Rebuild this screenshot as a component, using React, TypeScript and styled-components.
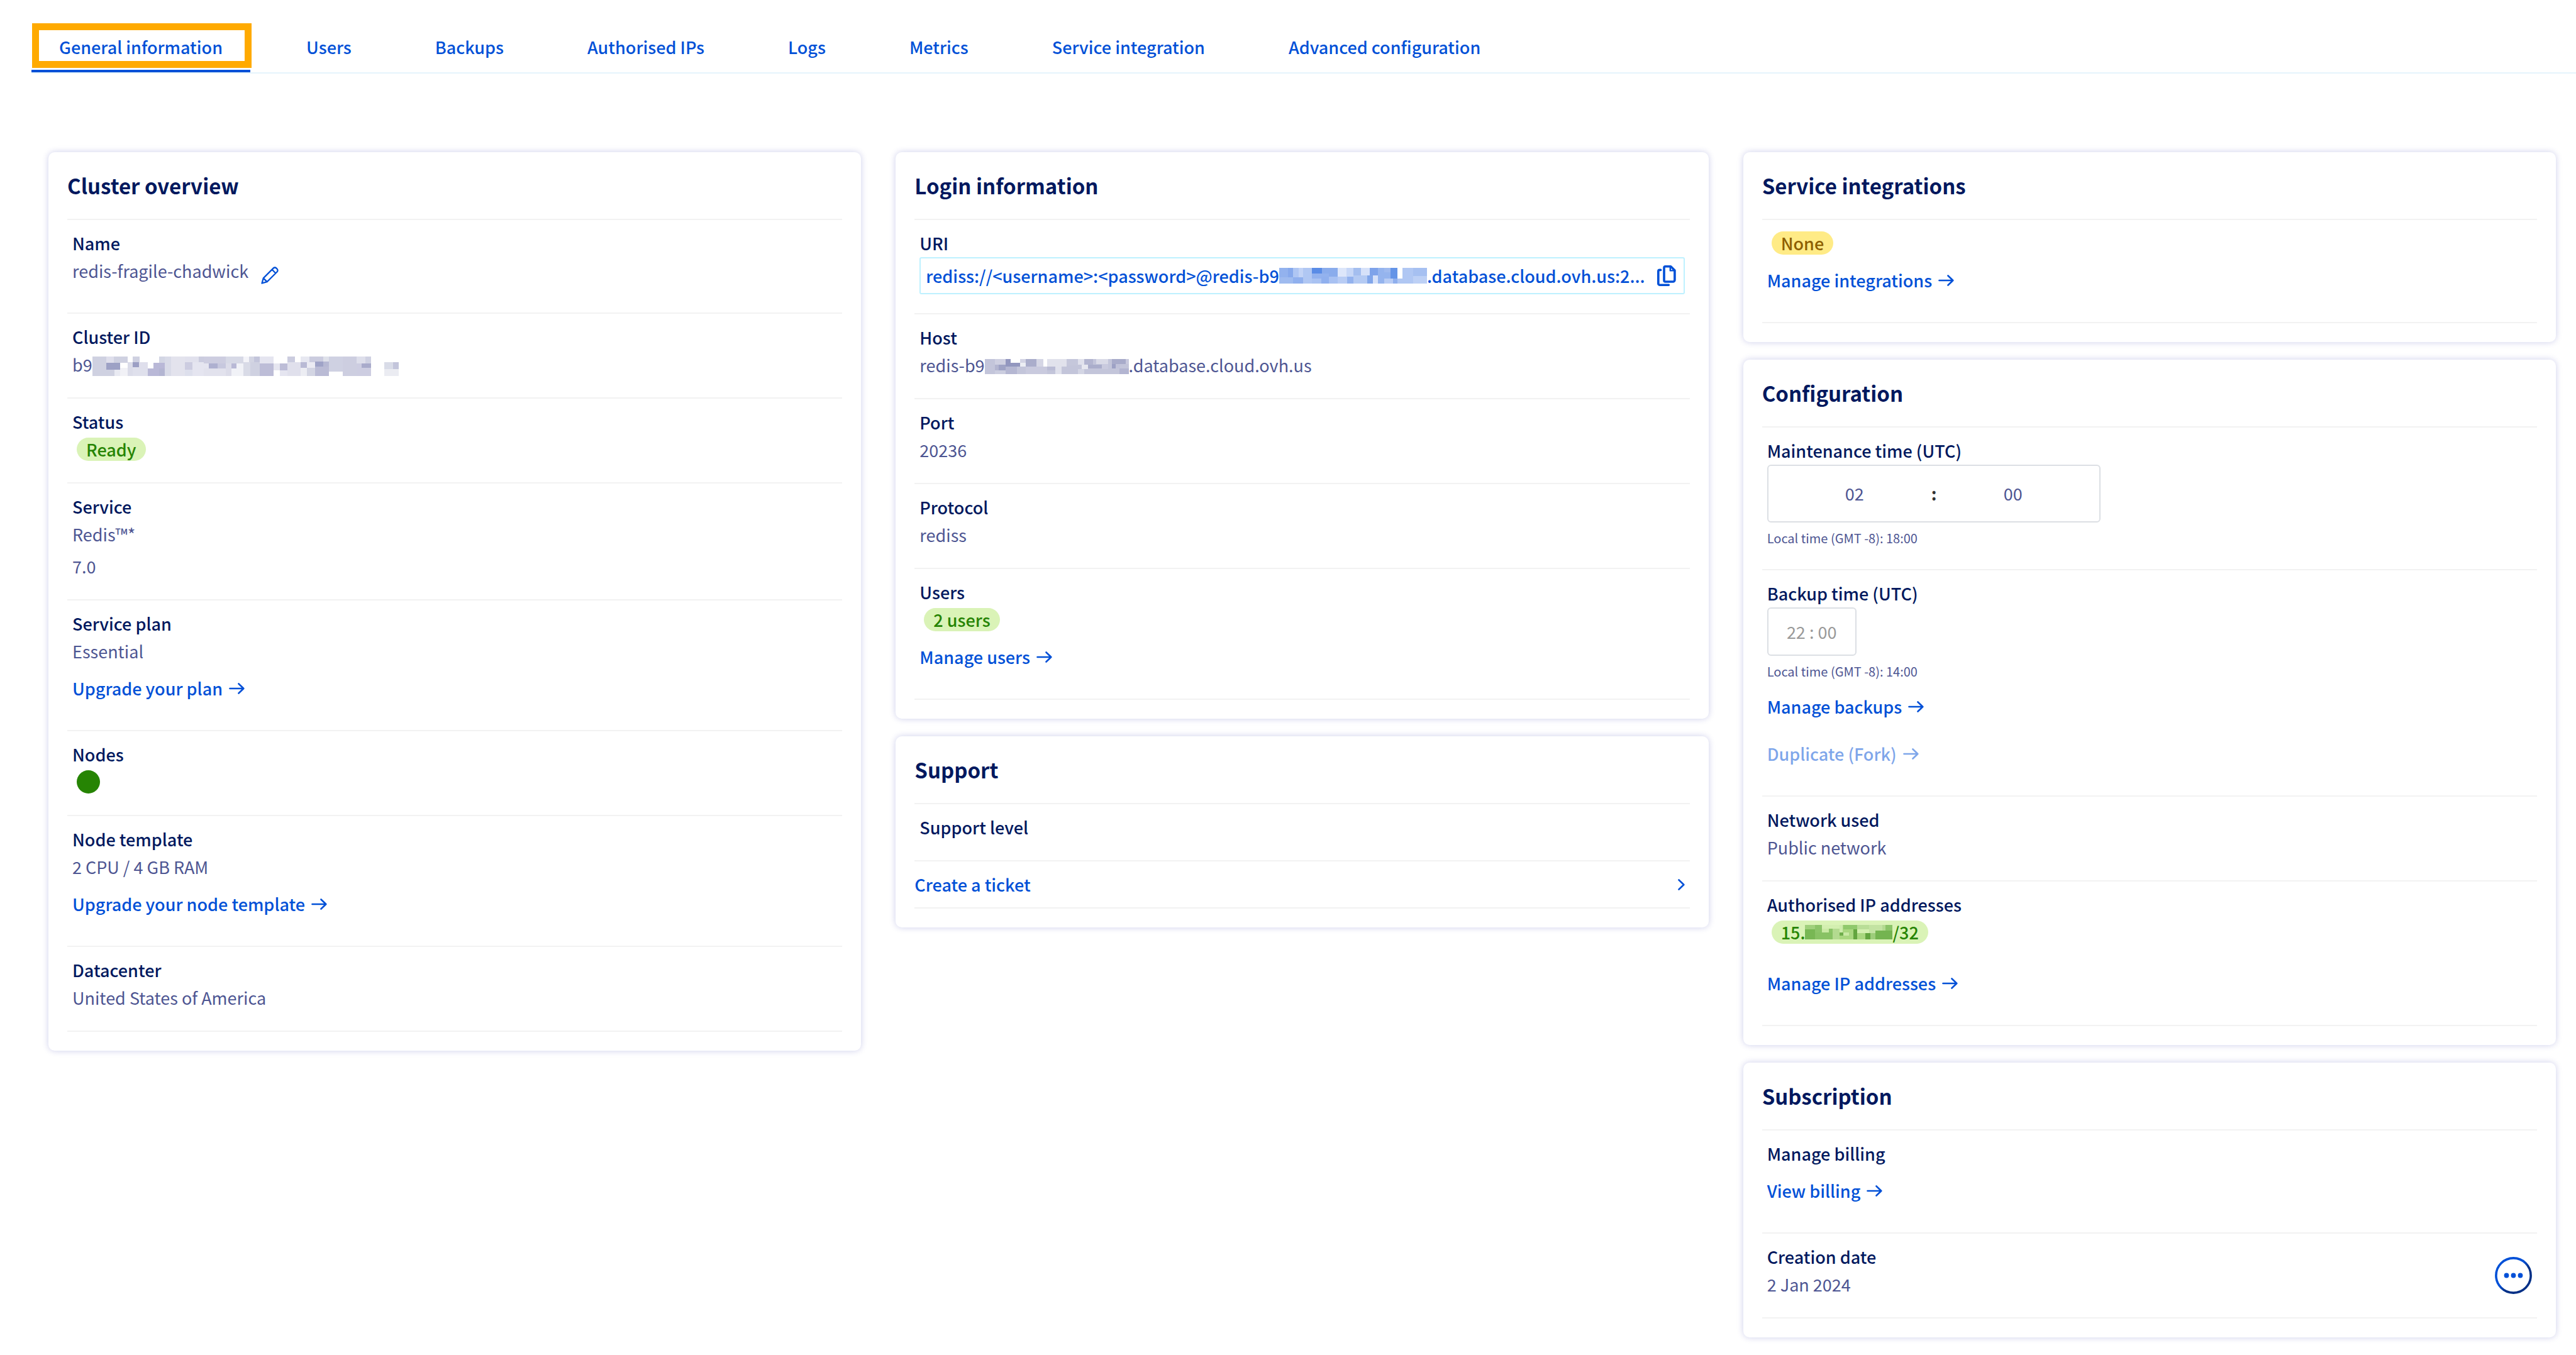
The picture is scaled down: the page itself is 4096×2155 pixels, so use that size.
import React from "react";
import styled, { createGlobalStyle } from "styled-components";

const color = {
  heading: "#00185e",
  text: "#4d5592",
  primary: "#0050d7",
  line: "#f2f2f2",
  field: "#dcdfe4",
};

const GlobalStyle = createGlobalStyle`
  *, *::before, *::after { box-sizing: border-box; }
  body {
    margin: 0;
    background: #fff;
    color: ${color.text};
    font-family: "Noto Sans CJK SC", "Noto Sans", sans-serif;
    font-size: 27px;
    line-height: 44px;
  }
  button, input { font: inherit; }
`;

/* ---------- Tabs ---------- */

const TabBar = styled.nav`
  display: flex;
  gap: 45px;
  margin-left: 50px;
  padding-top: 39px;
  border-bottom: 2px solid #e5f4fc;
`;

const Tab = styled.a<{ $active?: boolean }>`
  position: relative;
  padding: 0 44px;
  border-bottom: 4px solid ${(p) => (p.$active ? color.primary : "transparent")};
  color: ${color.primary};
  font-weight: 500;
  line-height: 72px;
  text-decoration: none;
  white-space: nowrap;
`;

const Highlight = styled.span`
  position: absolute;
  inset: -2px -2px 3px 1px;
  border: 11px solid #ffaa00;
  pointer-events: none;
`;

/* ---------- Cards ---------- */

const Board = styled.main`
  display: grid;
  grid-template-columns: repeat(3, minmax(0, 1fr));
  align-items: start;
  gap: 55px;
  padding: 125px 32px 28px 77px;
`;

const Column = styled.div`
  display: flex;
  flex-direction: column;
  gap: 28px;
`;

const CardBox = styled.section`
  padding: 31px 30px 30px;
  border-radius: 10px;
  background: #fff;
  box-shadow: 0 0 11px rgba(0, 14, 156, 0.2);
`;

const CardTitle = styled.h2`
  margin: 0 0 31px;
  color: ${color.heading};
  font-size: 33px;
  font-weight: 700;
  line-height: 44px;
`;

const List = styled.dl`
  margin: 0;
  border-bottom: 2px solid ${color.line};
`;

const RowBox = styled.div<{ $split?: boolean }>`
  display: ${(p) => (p.$split ? "flex" : "block")};
  align-items: center;
  justify-content: space-between;
  padding: 0 8px;
  border-top: 2px solid ${color.line};
`;

const RowBody = styled.div`
  padding: 15px 0 30px;
`;

const Term = styled.dt`
  color: ${color.heading};
  font-weight: 500;
`;

const Detail = styled.dd`
  margin: 0;
`;

const Value = styled.div`
  display: flex;
  align-items: center;

  & > svg { margin-top: 4px; }
`;

const Version = styled.div`
  margin-top: 7px;
`;

const NameLine = styled.div`
  display: flex;
  align-items: center;
  gap: 20px;
  height: 58px;
`;

const NameText = styled.span`
  align-self: flex-start;
`;

const PlainButton = styled.button`
  display: flex;
  padding: 0;
  border: 0;
  background: none;
  color: ${color.primary};
  cursor: pointer;
`;

const BadgeSlot = styled.div<{ $spaced?: boolean }>`
  display: flex;
  align-items: center;
  padding: 3px 0 ${(p) => (p.$spaced ? 26 : 4)}px 7px;
`;

const Badge = styled.span<{ $tone: "success" | "warning" }>`
  display: flex;
  align-items: center;
  padding: 0 15px;
  border-radius: 19px;
  background: ${(p) => (p.$tone === "success" ? "#daf3b7" : "#ffeb86")};
  color: ${(p) => (p.$tone === "success" ? "#268403" : "#8d5f00")};
  font-weight: 500;
  line-height: 37px;
`;

const NodeDot = styled.span`
  width: 37px;
  height: 37px;
  border-radius: 50%;
  background: #268403;
`;

const LinkStack = styled.div`
  display: flex;
  flex-direction: column;
  align-items: flex-start;
  gap: 30px;
  padding: 14px 0;
  line-height: 45px;
`;

const ArrowLink = styled.a<{ $disabled?: boolean }>`
  display: flex;
  align-items: center;
  gap: 10px;
  color: ${color.primary};
  font-weight: 500;
  text-decoration: none;
  opacity: ${(p) => (p.$disabled ? 0.5 : 1)};
`;

const TicketRow = styled.div`
  padding: 14px 8px 14px 0;
  border-top: 2px solid ${color.line};
  border-bottom: 2px solid ${color.line};
`;

const TicketLink = styled.a`
  display: flex;
  align-items: center;
  justify-content: space-between;
  color: ${color.primary};
  font-weight: 500;
  line-height: 45px;
  text-decoration: none;
`;

const TicketList = styled(List)`
  border-bottom: 0;
`;

/* ---------- Fields ---------- */

const UriBox = styled.div`
  display: flex;
  align-items: center;
  justify-content: space-between;
  height: 59px;
  padding: 0 12px 0 8px;
  border: 2px solid #bef1ff;
  border-radius: 3px;
`;

const UriText = styled.span`
  display: flex;
  align-items: center;
  color: ${color.primary};
  font-weight: 500;
  white-space: nowrap;
`;

const TimeBox = styled.div`
  display: flex;
  align-items: center;
  justify-content: center;
  gap: 22px;
  width: 530px;
  height: 92px;
  border: 2px solid ${color.field};
  border-radius: 6px;
`;

const TimeInput = styled.input`
  width: 200px;
  padding: 0;
  border: 0;
  background: none;
  color: ${color.text};
  text-align: center;
`;

const Colon = styled.span`
  width: 8px;
  color: #333;
  font-weight: 700;
  text-align: center;
`;

const LockedInput = styled.input`
  display: block;
  width: 142px;
  height: 77px;
  padding: 0;
  border: 2px solid ${color.field};
  border-radius: 6px;
  background: #fff;
  color: #999;
  text-align: center;
`;

const Hint = styled.div`
  margin-top: 6px;
  font-size: 20px;
  line-height: 38px;
`;

/* ---------- Drawings ---------- */

const Arrow = () => (
  <svg width="25" height="18" viewBox="0 0 25 18" fill="none" stroke="currentColor" strokeWidth="2.6" strokeLinecap="round" strokeLinejoin="round" aria-hidden="true">
    <path d="M1.5 9H23M15.5 1.5 23.3 9l-7.8 7.5" />
  </svg>
);

const Chevron = () => (
  <svg width="11" height="18" viewBox="0 0 11 18" fill="none" stroke="currentColor" strokeWidth="2.6" strokeLinecap="round" strokeLinejoin="round" aria-hidden="true">
    <path d="M1.5 1.5 9.3 9l-7.8 7.5" />
  </svg>
);

const Pencil = () => (
  <svg width="28" height="28" viewBox="0 0 28 28" fill="none" stroke="currentColor" strokeWidth="2.3" strokeLinecap="round" strokeLinejoin="round" aria-hidden="true">
    <path d="M1.5 26.5 3.8 18.4 19.8 2.4a3.1 3.1 0 0 1 4.4 0l1.4 1.4a3.1 3.1 0 0 1 0 4.4l-16 16zM17.6 4.8l5.7 5.7M3.8 18.4l5.7 5.7" />
  </svg>
);

const CopyIcon = () => (
  <svg width="30" height="33" viewBox="0 0 30 33" fill="none" stroke="currentColor" strokeWidth="3.6" strokeLinecap="round" strokeLinejoin="round" aria-hidden="true">
    <path d="M13 1.8h8.6L27.9 8v15.2a2.8 2.8 0 0 1-2.8 2.8H13a2 2 0 0 1-2-2V3.8a2 2 0 0 1 2-2z" />
    <path d="M20.8 2.6v5.8h6" strokeWidth="2.4" />
    <path d="M5.6 7.4H3.9a2.1 2.1 0 0 0-2.1 2.1v19.6a2.1 2.1 0 0 0 2.1 2.1h14.4" />
  </svg>
);

const MoreIcon = () => (
  <svg width="59" height="59" viewBox="0 0 59 59" aria-hidden="true">
    <defs>
      <linearGradient id="ring" x1="0" y1="0" x2="1" y2="1">
        <stop offset="0.45" stopColor="#0050d7" />
        <stop offset="0.6" stopColor="#002f86" />
      </linearGradient>
    </defs>
    <circle cx="29.5" cy="29.5" r="27.6" fill="none" stroke="url(#ring)" strokeWidth="3.6" />
    <g fill="#0050d7">
      <circle cx="18.5" cy="29.5" r="3.9" />
      <circle cx="29.5" cy="29.5" r="3.9" />
      <circle cx="40.5" cy="29.5" r="3.9" />
    </g>
  </svg>
);

type Block = [x: number, y: number, w: number, h: number, fill: string];

interface MosaicProps {
  width: number;
  height: number;
  units: [number, number];
  blocks: Block[];
}

/* Redacted characters, drawn as coloured blocks. */
const Mosaic = ({ width, height, units, blocks }: MosaicProps) => (
  <svg width={width} height={height} viewBox={`0 0 ${units[0]} ${units[1]}`} preserveAspectRatio="none" shapeRendering="crispEdges" aria-hidden="true">
    {blocks.map(([x, y, w, h, fill], i) => (
      <rect key={i} x={x} y={y} width={w} height={h} fill={fill} />
    ))}
  </svg>
);

const clusterBlocks: Block[] = [
  [0, 0, 106, 102, "#cfd1e1"], [67, 0, 36, 33, "#dfdfec"], [103, 0, 67, 33, "#cfd1e1"], [67, 33, 67, 36, "#9da1c5"],
  [106, 69, 28, 33, "#e9eaf2"], [134, 58, 36, 44, "#f1f1f6"], [193, 0, 36, 30, "#cfd1e1"], [170, 30, 24, 72, "#dbdce9"],
  [193, 30, 31, 27, "#9c9fc4"], [193, 57, 75, 45, "#dfe0ec"], [224, 30, 44, 35, "#dfdfec"], [268, 63, 54, 39, "#b9b8d7"],
  [294, 33, 54, 40, "#b9b8d7"], [322, 63, 28, 39, "#b3b5d2"], [322, 0, 30, 34, "#d3d6e4"], [350, 0, 29, 102, "#d9dbe8"],
  [379, 0, 66, 102, "#e3e3ed"], [445, 0, 67, 30, "#e1e1ed"], [445, 30, 39, 39, "#cccce0"], [445, 69, 39, 33, "#dddfec"],
  [484, 30, 78, 72, "#e5e5f0"], [512, 0, 50, 30, "#cbccdf"], [537, 0, 106, 37, "#cdcde0"], [562, 37, 42, 26, "#aeb0d0"],
  [604, 37, 40, 26, "#c7c8de"], [537, 63, 107, 39, "#e2e2ed"], [644, 0, 84, 36, "#d7d9e6"], [644, 36, 28, 66, "#dcdce9"],
  [672, 36, 22, 27, "#b9b9d6"], [672, 63, 56, 39, "#f1f2f7"], [694, 36, 34, 66, "#f1f2f7"], [728, 0, 28, 30, "#f4f4f9"],
  [728, 30, 33, 72, "#d9dbe7"], [756, 0, 25, 30, "#d3d5e3"], [761, 30, 45, 72, "#cfd1e1"], [781, 0, 25, 30, "#c3c5db"],
  [806, 0, 67, 36, "#e5e5f0"], [806, 36, 67, 66, "#bdbdd7"], [873, 36, 31, 36, "#e6e6f0"], [904, 36, 36, 36, "#bdbdd7"],
  [904, 72, 36, 30, "#e5e5f0"], [940, 0, 37, 30, "#cbccdf"], [940, 30, 65, 72, "#e0e0ec"], [1005, 0, 42, 30, "#e7e8f1"],
  [1005, 30, 31, 30, "#b9bad5"], [1005, 60, 31, 42, "#ecedf3"], [1036, 30, 39, 30, "#ebebf3"], [1036, 60, 39, 42, "#d3d5e3"],
  [1047, 0, 67, 30, "#cbccdf"], [1075, 50, 67, 52, "#babbd5"], [1075, 27, 39, 24, "#9fa3c7"], [1114, 0, 28, 27, "#dfe1ea"],
  [1114, 27, 28, 24, "#b6b8d3"], [1142, 0, 67, 78, "#cfd1e2"], [1209, 0, 67, 102, "#cdcee0"], [1276, 0, 40, 36, "#dedfeb"],
  [1276, 36, 68, 66, "#cdcde1"], [1316, 0, 28, 36, "#cfd1e2"], [1299, 36, 45, 24, "#a9abcb"], [1408, 30, 42, 36, "#d9dce8"],
  [1450, 30, 28, 36, "#c3c5db"], [1408, 66, 70, 36, "#ebecf2"],
];

const uriBlocks: Block[] = [
  [0, 0, 51, 48, "#93b2ee"], [32, 0, 19, 48, "#87a9ec"], [51, 0, 19, 48, "#afc6f3"], [70, 0, 18, 48, "#c2d3f6"],
  [88, 0, 31, 81, "#b0c7f3"], [0, 48, 51, 33, "#9fbbef"], [51, 48, 37, 33, "#90b0ee"], [119, 0, 38, 30, "#5a8ce6"],
  [157, 0, 57, 45, "#8aacec"], [119, 30, 62, 24, "#93b2ee"], [119, 54, 34, 27, "#a9c2f2"], [153, 45, 28, 36, "#90b0ee"],
  [181, 45, 67, 36, "#a8c1f2"], [214, 0, 32, 45, "#dde6fa"], [246, 0, 24, 45, "#c7d7f7"], [214, 45, 34, 36, "#b8ccf4"],
  [248, 45, 22, 36, "#93b2ee"], [270, 0, 28, 39, "#a4beef"], [270, 39, 50, 42, "#b4caf3"], [298, 0, 33, 39, "#d6e1f9"],
  [320, 39, 22, 42, "#81a6ea"], [331, 0, 28, 39, "#7ea3ea"], [342, 39, 17, 42, "#d6e1f9"], [359, 0, 46, 81, "#95b4ee"],
  [382, 0, 23, 24, "#9fbaef"], [405, 0, 26, 54, "#6494e7"], [382, 54, 32, 27, "#b8ccf4"], [414, 54, 18, 27, "#8fafed"],
  [432, 54, 18, 27, "#b0c7f3"], [450, 0, 38, 42, "#b0c7f3"], [488, 0, 51, 42, "#a6c0f1"], [450, 42, 38, 39, "#b0c7f3"],
  [488, 42, 51, 39, "#bdd0f5"],
];

const hostBlocks: Block[] = [
  [0, 0, 267, 56, "#c3c5da"], [19, 0, 20, 22, "#cfd0e1"], [19, 22, 20, 20, "#b3b5d0"], [26, 22, 13, 20, "#9fa3c5"],
  [19, 42, 20, 14, "#cbcddf"], [39, 0, 9, 13, "#9397bf"], [48, 0, 17, 13, "#ffffff"], [39, 13, 26, 16, "#9397bf"],
  [39, 29, 20, 27, "#b5b7d2"], [65, 0, 11, 14, "#d3d4e4"], [65, 14, 11, 15, "#eceef4"], [76, 0, 20, 27, "#aaadcb"],
  [76, 27, 39, 29, "#c9cade"], [96, 0, 12, 27, "#d5d6e5"], [108, 0, 7, 27, "#ffffff"], [115, 0, 37, 27, "#e1e2ec"],
  [115, 27, 16, 16, "#babcd5"], [131, 27, 11, 29, "#e0e1ec"], [152, 0, 20, 24, "#c5c7db"], [172, 0, 12, 22, "#e0e1ec"],
  [180, 22, 11, 16, "#e7e8f0"], [172, 38, 12, 18, "#d3d5e4"], [184, 0, 16, 22, "#b3b5d0"], [191, 22, 26, 14, "#aaadcb"],
  [206, 0, 23, 18, "#d9dae7"], [217, 18, 12, 20, "#c9cade"], [235, 0, 26, 18, "#a8abca"], [235, 18, 8, 18, "#9da1c5"],
  [243, 18, 8, 18, "#c0c2d9"], [261, 0, 6, 18, "#c9cade"], [250, 36, 17, 20, "#b3b5d1"],
];

const ipBlocks: Block[] = [
  [0, 0, 162, 56, "#a9d77f"], [0, 0, 19, 18, "#9fd07b"], [0, 18, 19, 38, "#78b754"], [19, 0, 13, 30, "#8bc468"],
  [32, 0, 32, 14, "#d3efb0"], [32, 14, 12, 16, "#c9e9a4"], [44, 14, 7, 16, "#8bc468"], [51, 14, 13, 42, "#b3da90"],
  [19, 30, 32, 26, "#88c264"], [64, 0, 6, 28, "#cdebab"], [64, 28, 7, 13, "#6fae4b"], [71, 0, 26, 16, "#8fc96c"],
  [71, 28, 10, 13, "#c9e9a4"], [90, 16, 7, 40, "#63a53f"], [97, 0, 22, 16, "#b9de97"], [97, 16, 22, 16, "#d3efb0"],
  [112, 32, 9, 24, "#63a53f"], [119, 0, 24, 32, "#c3e3a2"], [121, 32, 9, 24, "#9dcd7a"], [143, 0, 6, 22, "#b3da90"],
  [149, 0, 13, 22, "#8bc468"], [130, 23, 32, 33, "#74b450"],
];

/* ---------- Composed parts ---------- */

interface CardProps {
  title: string;
  children: React.ReactNode;
}

const Card = ({ title, children }: CardProps) => (
  <CardBox>
    <CardTitle>{title}</CardTitle>
    {children}
  </CardBox>
);

interface RowProps {
  label?: React.ReactNode;
  action?: React.ReactNode;
  children?: React.ReactNode;
}

const Row = ({ label, action, children }: RowProps) => (
  <RowBox $split={Boolean(action)}>
    <RowBody>
      {label && <Term>{label}</Term>}
      {children && <Detail>{children}</Detail>}
    </RowBody>
    {action}
  </RowBox>
);

const MoreLink = ({ children }: { children: string }) => (
  <LinkStack>
    <ArrowLink href="#">
      {children}
      <Arrow />
    </ArrowLink>
  </LinkStack>
);

const tabs = [
  "General information",
  "Users",
  "Backups",
  "Authorised IPs",
  "Logs",
  "Metrics",
  "Service integration",
  "Advanced configuration",
];

export default function App() {
  return (
    <>
      <GlobalStyle />
      <TabBar>
        {tabs.map((name, i) => (
          <Tab key={name} href="#" $active={i === 0} aria-current={i === 0 ? "page" : undefined}>
            {name}
            {i === 0 && <Highlight />}
          </Tab>
        ))}
      </TabBar>

      <Board>
        <Column>
          <Card title="Cluster overview">
            <List>
              <Row label="Name">
                <NameLine>
                  <NameText>redis-fragile-chadwick</NameText>
                  <PlainButton type="button" aria-label="Edit name">
                    <Pencil />
                  </PlainButton>
                </NameLine>
              </Row>
              <Row label="Cluster ID">
                <Value>
                  b9
                  <Mosaic width={487} height={31} units={[1478, 102]} blocks={clusterBlocks} />
                </Value>
              </Row>
              <Row label="Status">
                <BadgeSlot>
                  <Badge $tone="success">Ready</Badge>
                </BadgeSlot>
              </Row>
              <Row label="Service">
                <Value>Redis™*</Value>
                <Version>7.0</Version>
              </Row>
              <Row label="Service plan">
                <Value>Essential</Value>
                <MoreLink>Upgrade your plan</MoreLink>
              </Row>
              <Row label="Nodes">
                <BadgeSlot>
                  <NodeDot />
                </BadgeSlot>
              </Row>
              <Row label="Node template">
                <Value>2 CPU / 4 GB RAM</Value>
                <MoreLink>Upgrade your node template</MoreLink>
              </Row>
              <Row label="Datacenter">
                <Value>United States of America</Value>
              </Row>
            </List>
          </Card>
        </Column>

        <Column>
          <Card title="Login information">
            <List>
              <Row label="URI">
                <UriBox>
                  <UriText>
                    {"rediss://<username>:<password>@redis-b9"}
                    <Mosaic width={235} height={25} units={[539, 81]} blocks={uriBlocks} />
                    .database.cloud.ovh.us:2...
                  </UriText>
                  <PlainButton type="button" aria-label="Copy URI">
                    <CopyIcon />
                  </PlainButton>
                </UriBox>
              </Row>
              <Row label="Host">
                <Value>
                  redis-b9
                  <Mosaic width={229} height={24} units={[267, 56]} blocks={hostBlocks} />
                  .database.cloud.ovh.us
                </Value>
              </Row>
              <Row label="Port">
                <Value>20236</Value>
              </Row>
              <Row label="Protocol">
                <Value>rediss</Value>
              </Row>
              <Row label="Users">
                <BadgeSlot>
                  <Badge $tone="success">2 users</Badge>
                </BadgeSlot>
                <MoreLink>Manage users</MoreLink>
              </Row>
            </List>
          </Card>

          <Card title="Support">
            <TicketList>
              <Row label="Support level" />
            </TicketList>
            <TicketRow>
              <TicketLink href="#">
                Create a ticket
                <Chevron />
              </TicketLink>
            </TicketRow>
          </Card>
        </Column>

        <Column>
          <Card title="Service integrations">
            <List>
              <Row>
                <BadgeSlot>
                  <Badge $tone="warning">None</Badge>
                </BadgeSlot>
                <MoreLink>Manage integrations</MoreLink>
              </Row>
            </List>
          </Card>

          <Card title="Configuration">
            <List>
              <Row label={<label htmlFor="maintenance-hour">Maintenance time (UTC)</label>}>
                <TimeBox>
                  <TimeInput id="maintenance-hour" type="text" defaultValue="02" />
                  <Colon>:</Colon>
                  <TimeInput type="text" aria-label="Maintenance minutes" defaultValue="00" />
                </TimeBox>
                <Hint>Local time (GMT -8): 18:00</Hint>
              </Row>
              <Row label={<label htmlFor="backup-time">Backup time (UTC)</label>}>
                <LockedInput id="backup-time" type="text" disabled defaultValue="22 : 00" />
                <Hint>Local time (GMT -8): 14:00</Hint>
                <LinkStack>
                  <ArrowLink href="#">
                    Manage backups
                    <Arrow />
                  </ArrowLink>
                  <ArrowLink href="#" $disabled aria-disabled="true">
                    Duplicate (Fork)
                    <Arrow />
                  </ArrowLink>
                </LinkStack>
              </Row>
              <Row label="Network used">
                <Value>Public network</Value>
              </Row>
              <Row label="Authorised IP addresses">
                <BadgeSlot $spaced>
                  <Badge $tone="success">
                    15.
                    <Mosaic width={139} height={23} units={[162, 56]} blocks={ipBlocks} />
                    /32
                  </Badge>
                </BadgeSlot>
                <MoreLink>Manage IP addresses</MoreLink>
              </Row>
            </List>
          </Card>

          <Card title="Subscription">
            <List>
              <Row label="Manage billing">
                <MoreLink>View billing</MoreLink>
              </Row>
              <Row
                label="Creation date"
                action={
                  <PlainButton type="button" aria-label="More actions">
                    <MoreIcon />
                  </PlainButton>
                }
              >
                <Value>2 Jan 2024</Value>
              </Row>
            </List>
          </Card>
        </Column>
      </Board>
    </>
  );
}
